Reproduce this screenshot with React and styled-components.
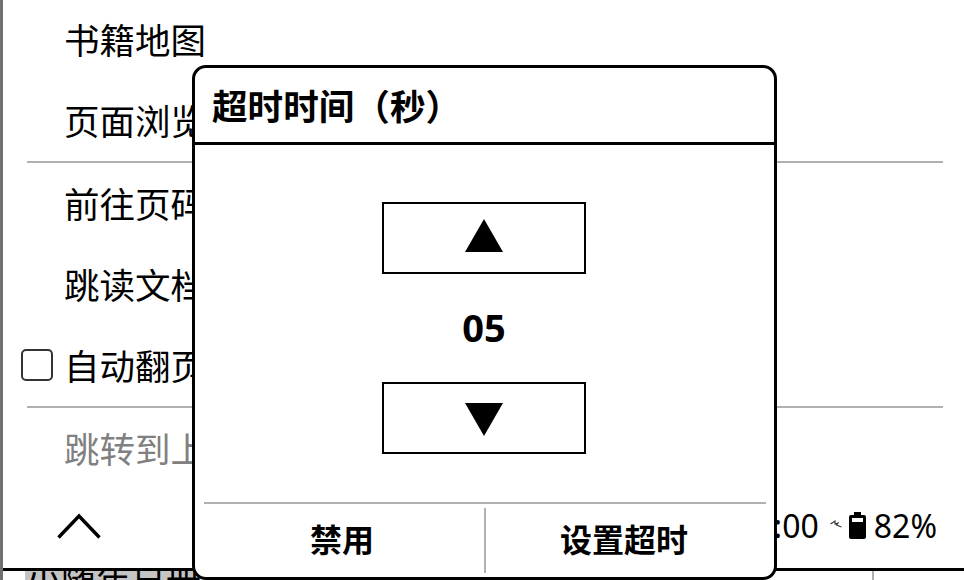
import React from "react";
import styled, { createGlobalStyle } from "styled-components";

const Global = createGlobalStyle`
  html, body { margin: 0; padding: 0; background: #fff; }
  body { font-family: "Noto Sans", "Noto Sans CJK SC", sans-serif; color: #000; }
`;

const Page = styled.div`
  position: relative;
  width: 964px;
  height: 580px;
  overflow: hidden;
  box-sizing: border-box;
  border-left: 3px solid #707070;
  background: #fff;
`;

const Menu = styled.div`
  display: flex;
  flex-direction: column;
  height: 572px;
  margin-top: -1px;
  box-sizing: border-box;
  border-bottom: 3px solid #000;
`;

const Row = styled.div`
  display: flex;
  align-items: center;
  height: 81px;
  flex: none;
  box-sizing: border-box;
  padding: 0 0 2px ${(p) => (p.$check ? "18px" : "61px")};
  gap: 11px;
  font-family: "Noto Sans CJK SC", sans-serif;
  font-size: 35.5px;
  line-height: 1;
  color: ${(p) => (p.$muted ? "#808080" : "#000")};
  white-space: nowrap;
`;

const Sep = styled.div`
  flex: none;
  height: 2px;
  margin: 0 21px 0 24px;
  background: #b0b0b0;
`;

const Check = styled.span`
  flex: none;
  width: 32px;
  height: 32px;
  box-sizing: border-box;
  border: 2px solid #333;
  border-radius: 5px;
`;

const StatusBar = styled.div`
  flex: 1;
  display: flex;
  align-items: center;
  justify-content: space-between;
  padding: 0 27px 6px 54px;
`;

const Status = styled.div`
  display: flex;
  align-items: center;
  font-size: 32px;
  line-height: 1;
`;

const Clock = styled.span`
  margin-right: 11px;
`;

const Charge = styled.svg`
  margin: 0 7px 4px 0;
`;

const Battery = styled.svg`
  margin-right: 8px;
`;

const Under = styled.div`
  display: flex;
  height: 9px;
  overflow: hidden;
`;

const Highlight = styled.div`
  margin-left: 22px;
  width: 846px;
  height: 40px;
  padding-left: 1px;
  background: linear-gradient(to right, #c4c4c4 0 170px, #fff 170px);
  border-right: 2px solid #b0b0b0;
  font-family: "Noto Sans CJK SC", sans-serif;
  font-size: 35px;
  line-height: 14px;
  white-space: nowrap;
`;

const Dialog = styled.div`
  position: absolute;
  left: 189px;
  top: 65px;
  width: 585px;
  height: 515px;
  box-sizing: border-box;
  display: flex;
  flex-direction: column;
  background: #fff;
  border: 3px solid #000;
  border-radius: 14px;
`;

const Title = styled.div`
  flex: none;
  height: 77px;
  box-sizing: border-box;
  padding: 0 0 0 17px;
  display: flex;
  align-items: center;
  border-bottom: 3px solid #000;
  font-family: "Noto Sans CJK SC", sans-serif;
  font-weight: 700;
  font-size: 35.6px;
  line-height: 1;
  white-space: nowrap;
  text-spacing-trim: space-all;
  font-feature-settings: "chws" 0, "halt" 0;
`;

const Body = styled.div`
  flex: 1;
  display: flex;
  flex-direction: column;
  align-items: center;
  padding: 57px 1px 0 0;
`;

const Stepper = styled.button`
  width: 204px;
  height: 72px;
  padding: ${(p) => (p.$down ? "2px 0 0" : "0 0 6px")};
  display: flex;
  align-items: center;
  justify-content: center;
  background: #fff;
  border: 2px solid #000;
  border-radius: 0;
`;

const Value = styled.div`
  height: 108px;
  box-sizing: border-box;
  padding-bottom: 2px;
  display: flex;
  align-items: center;
  justify-content: center;
  font-weight: 700;
  font-size: 38px;
  line-height: 1;
`;

const Footer = styled.div`
  flex: none;
  height: 75px;
  margin: 0 8px 0 9px;
  display: flex;
  border-top: 2px solid #b0b0b0;
  padding: 4px 0;
  box-sizing: border-box;
`;

const Action = styled.div`
  flex: 1;
  display: flex;
  align-items: center;
  justify-content: center;
  padding: 0 4px 6px 0;
  font-family: "Noto Sans CJK SC", sans-serif;
  font-weight: 700;
  font-size: 32px;
  line-height: 1;
  & + & { border-left: 2px solid #b0b0b0; }
`;

const Triangle = ({ down }) => (
  <svg width="38" height="33" viewBox="0 0 38 33" style={{ transform: down ? "rotate(180deg)" : "none" }}>
    <polygon points="19,0 38,33 0,33" fill="#000" />
  </svg>
);

export default function App() {
  return (
    <Page>
      <Global />
      <Menu>
        <Row>书籍地图</Row>
        <Row>页面浏览</Row>
        <Sep />
        <Row>前往页码</Row>
        <Row>跳读文档</Row>
        <Row $check>
          <Check />
          <span>自动翻页</span>
        </Row>
        <Sep />
        <Row $muted>跳转到上次位置</Row>
        <StatusBar>
          <svg width="44" height="26" viewBox="0 0 44 26">
            <polyline points="1.5,24.5 22,3 42.5,24.5" fill="none" stroke="#000" strokeWidth="3.4" />
          </svg>
          <Status>
            <Clock>12:00</Clock>
            <Charge width="12" height="9" viewBox="0 0 12 9">
              <polyline points="0.5,5 5,2 5,5 8,4 6.5,6 11.5,8" fill="none" stroke="#333" strokeWidth="1.1" />
            </Charge>
            <Battery width="17" height="27" viewBox="0 0 17 27">
              <path d="M5 0h7v3h3a2 2 0 0 1 2 2v20a2 2 0 0 1-2 2H2a2 2 0 0 1-2-2V5a2 2 0 0 1 2-2h3z" fill="#000" />
              <rect x="3" y="6" width="11" height="4" fill="#fff" />
            </Battery>
            <span>82%</span>
          </Status>
        </StatusBar>
      </Menu>
      <Under>
        <Highlight>小随年日册</Highlight>
      </Under>
      <Dialog>
        <Title>超时时间（秒）</Title>
        <Body>
          <Stepper>
            <Triangle />
          </Stepper>
          <Value>05</Value>
          <Stepper $down>
            <Triangle down />
          </Stepper>
        </Body>
        <Footer>
          <Action>禁用</Action>
          <Action>设置超时</Action>
        </Footer>
      </Dialog>
    </Page>
  );
}
